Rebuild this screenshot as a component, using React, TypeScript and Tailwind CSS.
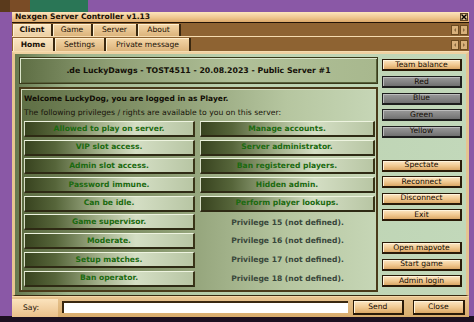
import React from 'react'

const TAN_BTN =
  'bg-[linear-gradient(180deg,#fde7c4_0%,#f0c890_55%,#dca866_100%)] border border-[#2a1a08] border-r-2 border-b-2 shadow-[inset_1px_1px_0_#fff4dc]'
const GRAY_BTN =
  'bg-[linear-gradient(180deg,#9a9a9a_0%,#828282_60%,#707070_100%)] border border-[#1e1e1e] border-r-2 border-b-2 shadow-[inset_1px_1px_0_#bcbcbc]'

function Btn({ label, gray, className = '' }: { label: string; gray?: boolean; className?: string }) {
  return (
    <div
      className={`h-[12px] flex items-center justify-center text-[7.6px] leading-none text-[#140c04] ${
        gray ? GRAY_BTN : TAN_BTN
      } ${className}`}
    >
      {label}
    </div>
  )
}

function Tab({ label, active, w }: { label: string; active?: boolean; w: string }) {
  return (
    <div
      className={`${w} h-full flex items-center justify-center text-[7.6px] leading-none text-[#1a1006] border-r-2 border-[#3a2810] shadow-[inset_1px_1px_0_#fff0d0] ${
        active
          ? 'font-bold bg-[linear-gradient(180deg,#fbe6c4,#ecd0a4)]'
          : 'bg-[linear-gradient(180deg,#f4d6a8,#dcb47c)]'
      }`}
    >
      {label}
    </div>
  )
}

function Arrows() {
  return (
    <div className="ml-auto flex h-full items-center gap-[1px] pr-[1px]">
      {['M6 2 L3 5 L6 8', 'M3 2 L6 5 L3 8'].map((d) => (
        <div key={d} className="w-[8px] h-[10px] bg-[#d8b07a] border border-[#6a4a20] flex items-center justify-center">
          <svg width="8" height="10" viewBox="0 0 9 10">
            <path d={d} fill="#8a6a40" />
          </svg>
        </div>
      ))}
    </div>
  )
}

const LEFT = [
  'Allowed to play on server.',
  'VIP slot access.',
  'Admin slot access.',
  'Password immune.',
  'Can be idle.',
  'Game supervisor.',
  'Moderate.',
  'Setup matches.',
  'Ban operator.',
]
const RIGHT = [
  'Manage accounts.',
  'Server administrator.',
  'Ban registered players.',
  'Hidden admin.',
  'Perform player lookups.',
]
const UNDEFINED = [15, 16, 17, 18]

function Priv({ label }: { label: string }) {
  return (
    <div className="h-[16px] flex items-center justify-center text-[7.6px] font-bold leading-none text-[#1b6a10] border-t border-l border-t-[#eef4e0] border-l-[#d6dcc4] border-b-2 border-r-2 border-b-[#2e2a14] border-r-[#3a3418] bg-[linear-gradient(90deg,#38431f_0%,#56653a_18%,#a2b08a_44%,#d4dec4_66%,#b8c6a4_100%)]">
      {label}
    </div>
  )
}

export default function App() {
  const rows: React.ReactNode[] = []
  for (let i = 0; i < 9; i++) {
    rows.push(<Priv key={'l' + i} label={LEFT[i]} />)
    if (i < RIGHT.length) {
      rows.push(<Priv key={'r' + i} label={RIGHT[i]} />)
    } else {
      rows.push(
        <div key={'r' + i} className="h-[16px] flex items-center justify-center text-[7.6px] font-bold leading-none text-[#38463a]">
          Privilege {UNDEFINED[i - RIGHT.length]} (not defined).
        </div>
      )
    }
  }

  return (
    <div className="relative w-[474px] h-[322px] overflow-hidden bg-[#8a58a6] font-['DejaVu_Sans',sans-serif]">
      {/* desktop */}
      <div className="absolute left-0 top-0 flex h-[12px]">
        <div className="w-[10px] bg-[#5a3a1c]" />
        <div className="w-[20px] bg-[#7a4c26]" />
        <div className="w-[58px] bg-[#2a7656]" />
      </div>
      <div className="absolute left-0 bottom-0 w-full h-[6px] bg-[#1c1020]" />

      {/* window */}
      <div className="absolute left-[12px] top-[12px] w-[457px] h-[305px] flex flex-col bg-[#8e6332]">
        {/* title */}
        <div className="h-[11px] flex items-center border-b border-[#241406] bg-[linear-gradient(180deg,#fde4bc,#eec48c_60%,#dcaa6a)]">
          <span className="pl-[3px] text-[7.6px] font-bold leading-none text-[#1a1006]">Nexgen Server Controller v1.13</span>
          <div className="ml-auto mr-[1px] w-[8px] h-[8px] flex items-center justify-center bg-[#e8c898] border border-[#5a4020]">
            <svg width="6" height="6" viewBox="0 0 6 6">
              <path d="M0.5 0.5 L5.5 5.5 M5.5 0.5 L0.5 5.5" stroke="#000" strokeWidth="1.4" />
            </svg>
          </div>
        </div>

        {/* tab rows */}
        <div className="h-[14px] flex items-stretch pl-[1px] pt-[1px] border-b border-[#f6dcb0]">
          <Tab label="Client" active w="w-[40px]" />
          <Tab label="Game" w="w-[40px]" />
          <Tab label="Server" w="w-[45px]" />
          <Tab label="About" w="w-[43px]" />
          <Arrows />
        </div>
        <div className="h-[15px] flex items-stretch pl-[1px] pt-[1px] border-b border-[#f6dcb0]">
          <Tab label="Home" active w="w-[42px]" />
          <Tab label="Settings" w="w-[51px]" />
          <Tab label="Private message" w="w-[85px]" />
          <Arrows />
        </div>

        {/* body */}
        <div className="h-[244px] border-x-[3px] border-t-[2px] border-b border-x-[#e6c490] border-t-[#efd2a2] border-b-[#3a2a10] bg-[#e6c490]">
          <div className="h-full flex gap-[4px] pl-[4px] pr-[3px] pt-[3px] bg-[linear-gradient(90deg,#66784e_0%,#9fb48c_12%,#bcd2b0_50%,#c2d8ba_100%)]">
            <div className="w-[359px] flex flex-col gap-[3px]">
              <div className="h-[27px] flex items-center justify-center text-[7.8px] font-bold leading-none text-[#141008] border border-[#3a3a1a] shadow-[inset_1px_1px_0_#dce6cc,inset_-1px_-1px_0_#56603a] bg-[linear-gradient(90deg,#5e6e44_0%,#8e9e74_25%,#b0c098_60%,#a8b88e_100%)]">
                .de LuckyDawgs - TOST4511 - 20.08.2023 - Public Server #1
              </div>
              <div className="h-[205px] flex flex-col border-2 border-[#4a3a1a] shadow-[inset_1px_1px_0_#d4dcc0] bg-[linear-gradient(90deg,#5e6e44_0%,#8a9a70_40%,#b6c6a0_75%,#c6d6b6_100%)]">
                <div className="pl-[3px] pt-[5px] text-[7.5px] font-bold leading-[10px] text-[#100c04]">
                  Welcome LuckyDog, you are logged in as Player.
                </div>
                <div className="pl-[3px] pt-[4px] text-[7.7px] leading-[10px] text-[#18140a]">
                  The following privileges / rights are available to you on this server:
                </div>
                <div className="mt-[3px] pl-[3px] grid grid-cols-[171px_175px] gap-x-[5px] gap-y-[2.7px]">{rows}</div>
              </div>
            </div>

            <div className="w-[80px] flex flex-col pt-[2px]">
              <Btn label="Team balance" />
              <div className="flex flex-col gap-[4.5px] mt-[5px]">
                <Btn label="Red" gray />
                <Btn label="Blue" gray />
                <Btn label="Green" gray />
                <Btn label="Yellow" gray />
              </div>
              <div className="flex flex-col gap-[4.5px] mt-[22px]">
                <Btn label="Spectate" />
                <Btn label="Reconnect" />
                <Btn label="Disconnect" />
                <Btn label="Exit" />
              </div>
              <div className="flex flex-col gap-[4.5px] mt-[21px]">
                <Btn label="Open mapvote" />
                <Btn label="Start game" />
                <Btn label="Admin login" />
              </div>
            </div>
          </div>
        </div>

        {/* say bar */}
        <div className="flex-1 flex items-center gap-[4px] pr-[4px] bg-[linear-gradient(180deg,#e8c490,#d8ac6c)] border-t border-[#f4d8a8]">
          <div className="w-[46px] self-stretch mt-[2px] flex items-center pl-[11px] text-[7.6px] leading-none text-[#1a1006] bg-[linear-gradient(180deg,#fbe3bd,#eac08a)]">
            Say:
          </div>
          <div className="w-[290px] h-[12px] bg-white border-t-2 border-l-2 border-[#3a2810]" />
          <Btn label="Send" className="w-[51px] h-[15px] ml-[1px]" />
          <Btn label="Close" className="w-[53px] h-[15px] ml-[5px]" />
        </div>
      </div>
    </div>
  )
}
